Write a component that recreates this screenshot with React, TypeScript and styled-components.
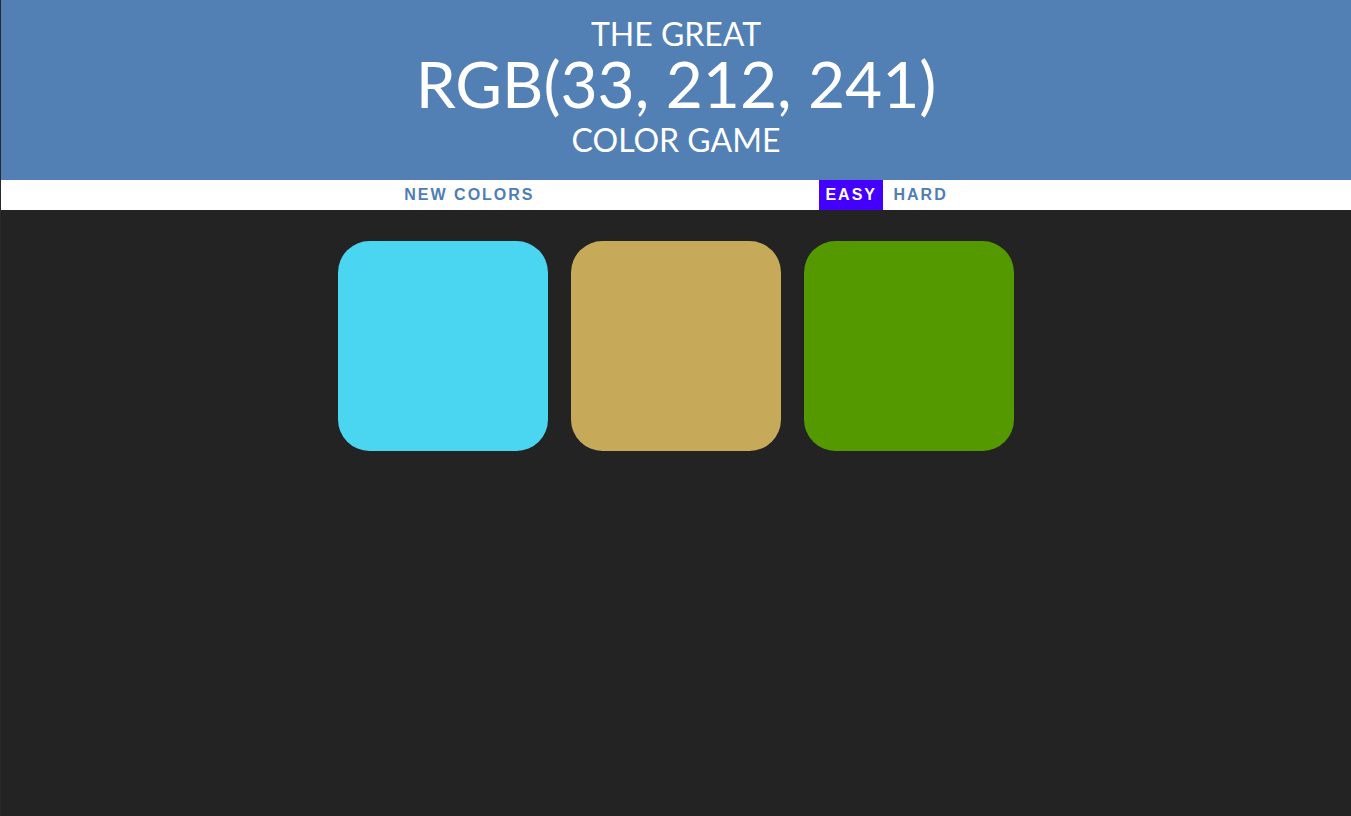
import React, { useState } from "react";
import styled, { createGlobalStyle } from "styled-components";

const GlobalStyle = createGlobalStyle`
    html, body {
        margin: 0;
        padding: 0;
    }
    body {
        background: #232323;
        border-left: 1px solid #2a2a2a;
        min-height: 100vh;
        font-family: "Lato", "Liberation Sans", sans-serif;
    }
`;

const squares = ["#4ad5f1", "#c7aa59", "#559900"];

export default function App() {
    const [mode, setMode] = useState<"easy" | "hard">("easy");

    return (
        <>
            <GlobalStyle />
            <Header>
                <Title>
                    <TitleLine $size={32} $line={35}>The Great</TitleLine>
                    <TitleLine $size={64} $line={66}>RGB(33, 212, 241)</TitleLine>
                    <TitleLine $size={32} $line={46}>Color Game</TitleLine>
                </Title>
            </Header>
            <Stripe>
                <StripeButton>New Colors</StripeButton>{" "}
                <Message />{" "}
                <StripeButton $selected={mode === "easy"} onClick={() => setMode("easy")}>
                    Easy
                </StripeButton>{" "}
                <StripeButton $selected={mode === "hard"} onClick={() => setMode("hard")}>
                    Hard
                </StripeButton>
            </Stripe>
            <Container>
                {squares.map((c) => (
                    <Square key={c} $color={c} />
                ))}
            </Container>
        </>
    );
}

const Header = styled.header`
    background: #527fb4;
    color: #ffffff;
    text-align: center;
    padding: 16px 0 17px;
`;

const Title = styled.h1`
    margin: 0;
    font-weight: 400;
    text-transform: uppercase;
`;

const TitleLine = styled.span<{ $size: number; $line: number }>`
    display: block;
    font-size: ${(p) => p.$size}px;
    line-height: ${(p) => p.$line}px;
`;

const Stripe = styled.div`
    background: #ffffff;
    height: 30px;
    text-align: center;
    font-family: "Liberation Sans", Arial, sans-serif;
    font-size: 16px;
`;

const Message = styled.span`
    display: inline-block;
    width: 20%;
`;

const StripeButton = styled.button<{ $selected?: boolean }>`
    border: none;
    outline: none;
    height: 100%;
    padding: 0 6px;
    margin: 0;
    vertical-align: top;
    font-family: "Liberation Sans", Arial, sans-serif;
    font-size: 16px;
    font-weight: 700;
    letter-spacing: 2px;
    text-transform: uppercase;
    cursor: pointer;
    color: ${(p) => (p.$selected ? "#ffffff" : "#4f7db6")};
    background: ${(p) => (p.$selected ? "#4400ff" : "none")};
`;

const Container = styled.div`
    max-width: 700px;
    margin: 19px auto;
    display: flex;
    flex-wrap: wrap;
`;

const Square = styled.div<{ $color: string }>`
    width: 30%;
    padding-bottom: 30%;
    margin: 1.66%;
    border-radius: 15%;
    background: ${(p) => p.$color};
`;
